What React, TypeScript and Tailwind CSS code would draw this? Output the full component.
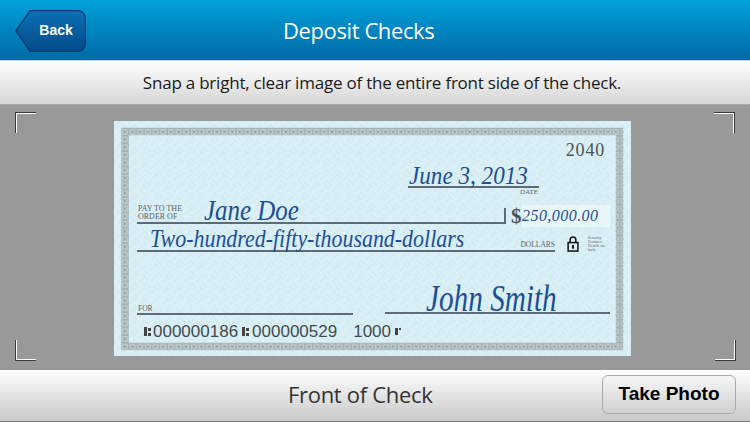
import React from 'react'

const hand = "font-['Liberation_Serif',serif] italic text-[#1c4f97] leading-none origin-bottom-left whitespace-nowrap"
const printed = "font-['Liberation_Serif',serif] text-[#5b6468] leading-none"

function Corner({ className, inner }: { className: string; inner: string }) {
  return (
    <div className={`absolute w-[21px] h-[21px] border-[#3a3a3a] ${className}`}>
      <div className={`w-full h-full border-white ${inner}`} />
    </div>
  )
}

function MicrMark() {
  return (
    <span className="inline-flex items-center gap-px h-[10px] w-[8px]">
      <span className="w-[3px] h-[9px] bg-[#444]" />
      <span className="flex flex-col gap-[2px]">
        <span className="w-[3px] h-[3px] bg-[#444]" />
        <span className="w-[3px] h-[3px] bg-[#444]" />
      </span>
    </span>
  )
}

function CheckArt() {
  return (
    <svg className="absolute inset-0 w-full h-full" viewBox="0 0 517 235">
      <defs>
        <pattern id="weave" width="16" height="16" patternUnits="userSpaceOnUse" patternTransform="rotate(45)">
          <path d="M0 4h8M0 8h8M8 12h8M8 16h8M12 0v8M4 8v8" stroke="#cfe6ee" strokeWidth="1" fill="none" />
        </pattern>
        <pattern id="strip" width="7.67" height="7.67" patternUnits="userSpaceOnUse" x="7" y="7">
          <rect width="7.67" height="7.67" fill="#a6b4b7" />
          <rect x="1" y="1" width="5.67" height="5.67" fill="#c0ced1" />
          <path d="M2.2 2.2l3.2 3.2M5.4 2.2L2.2 5.4" stroke="#7f8c8f" strokeWidth="0.8" />
        </pattern>
      </defs>
      <rect width="517" height="235" fill="#daf0f6" />
      <rect width="517" height="235" fill="url(#weave)" />
      <rect x="11" y="10.5" width="494.5" height="215" fill="none" stroke="url(#strip)" strokeWidth="7.5" />
    </svg>
  )
}

export default function App() {
  return (
    <div className="w-[750px] h-[422px] overflow-hidden flex flex-col font-['Open_Sans',sans-serif]">
      {/* header */}
      <div className="h-[61px] shrink-0 flex items-center pl-[15px] bg-gradient-to-b from-[#00a2da] to-[#0069a6] border-b border-[#c3d3dd]">
        <button className="relative w-[71px] h-[42px] flex items-center justify-center pl-[11px] mt-[1px]">
          <svg className="absolute inset-0 w-full h-full" viewBox="0 0 71 42">
            <defs>
              <linearGradient id="backFill" x1="0" y1="0" x2="0" y2="1">
                <stop offset="0" stopColor="#0a71b4" />
                <stop offset="1" stopColor="#034a8a" />
              </linearGradient>
            </defs>
            <path
              d="M15 .7H63a7.3 7.3 0 0 1 7.3 7.3v26a7.3 7.3 0 0 1-7.3 7.3H15L.8 21z"
              fill="url(#backFill)"
              stroke="#04386b"
              strokeWidth="1.2"
              strokeLinejoin="round"
            />
          </svg>
          <span className="relative font-['Liberation_Sans',sans-serif] font-bold text-[14px] text-white">Back</span>
        </button>
        <h1 className="ml-[197px] text-[22px] leading-none text-white tracking-[-0.4px] whitespace-nowrap">Deposit Checks</h1>
      </div>

      {/* instruction */}
      <div className="h-[44px] shrink-0 flex items-center justify-center pl-[14px] bg-gradient-to-b from-white to-[#d6d6d6] border-b border-[#a9a9a9]">
        <p className="text-[17px] leading-none text-[#1a1a1a] tracking-[-0.22px] whitespace-nowrap">
          Snap a bright, clear image of the entire front side of the check.
        </p>
      </div>

      {/* camera area */}
      <div className="relative h-[265px] shrink-0 bg-[#999999] flex justify-center pt-[16px]">
        <Corner className="left-[15px] top-[7px] border-t border-l" inner="border-t border-l" />
        <Corner className="right-[15px] top-[7px] border-t border-r" inner="border-t border-r" />
        <Corner className="left-[15px] bottom-[9px] border-b border-l" inner="border-b border-l" />
        <Corner className="right-[14px] bottom-[9px] border-b border-r" inner="border-b border-r" />

        <div className="relative w-[517px] h-[235px] ml-[-5px] overflow-hidden">
          <CheckArt />
          <div className="relative h-full flex flex-col pl-[23px] pr-[21px]">
            <div className="h-[37px] pt-[20px] flex justify-end pr-[5px]">
              <span className="font-['Liberation_Serif',serif] leading-none text-[18px] text-[#4b5357] tracking-[0.8px]">2040</span>
            </div>

            {/* date */}
            <div className="h-[30px] flex justify-end pr-[71px]">
              <div className="w-[131px] h-[30px] border-b-2 border-[#5f6b73] flex items-end pl-[1px]">
                <span className={`${hand} text-[26px] scale-x-[.89] mb-[-3px]`}>June 3, 2013</span>
              </div>
            </div>
            <div className="h-[8px] flex justify-end pr-[72px] pt-[1px]">
              <span className={`${printed} text-[7px]`}>DATE</span>
            </div>

            {/* pay to */}
            <div className="h-[29px] mt-[1px] flex items-start">
              <div className="w-[367px] h-[27px] flex items-end border-b-2 border-[#5f6b73]">
                <span className={`${printed} text-[8px] w-[67px] pb-[1px] pl-[1px]`}>
                  PAY TO THE
                  <br />
                  ORDER OF
                </span>
                <span className={`${hand} text-[30px] scale-x-[.83] mb-[-3px]`}>Jane Doe</span>
              </div>
              <div className="w-[2px] h-[16px] mt-[11px] bg-[#5f6b73]" />
              <span className="ml-[5px] mt-[9px] w-[11px] font-['Liberation_Serif',serif] font-bold text-[21px] leading-none text-[#4b5357]">$</span>
              <div className="mt-[8px] w-[88px] h-[22px] bg-[#e8f5f9] flex items-center">
                <span className={`${hand} text-[16px] tracking-[0.45px]`}>250,000.00</span>
              </div>
            </div>

            {/* amount in words */}
            <div className="h-[30px] flex items-start">
              <div className="w-[419px] h-[26px] border-b-2 border-[#5f6b73] flex items-end justify-between pl-[13px]">
                <span className={`${hand} w-[314px] text-[25px] scale-x-[.877] mb-[-1px]`}>Two-hundred-fifty-thousand-dollars</span>
                <span className={`${printed} text-[7.5px] pb-[2px]`}>DOLLARS</span>
              </div>
              <svg className="ml-[12px] mt-[10px] shrink-0" width="12" height="16" viewBox="0 0 12 17">
                <path d="M3 7V4a3 3 0 0 1 6 0v3" fill="none" stroke="#111" strokeWidth="1.6" />
                <rect x="0.8" y="7" width="10.4" height="9" fill="none" stroke="#111" strokeWidth="1.6" />
                <rect x="5" y="9.5" width="2" height="4" fill="#111" />
              </svg>
              <span className={`${printed} ml-[9px] mt-[10px] text-[4px] leading-[4px] w-[22px]`}>
                Security Features Details on back
              </span>
            </div>

            {/* memo and signature */}
            <div className="h-[34px] mt-[25px] flex items-end">
              <div className="w-[216px] h-[11px] border-b-2 border-[#5f6b73] flex items-end pl-[1px]">
                <span className={`${printed} text-[7.5px] pb-[1px]`}>FOR</span>
              </div>
              <div className="ml-[32px] w-[225px] h-[34px] mb-[1px] border-b-2 border-[#5f6b73] flex items-end pl-[41px]">
                <span className={`${hand} text-[37px] scale-x-[.79] mb-[-5px]`}>John Smith</span>
              </div>
            </div>

            {/* micr line */}
            <div className="mt-[8px] pl-[7px] flex items-center font-['Liberation_Sans',sans-serif] text-[17px] leading-none text-[#444b4f] whitespace-nowrap">
              <MicrMark />
              <span className="ml-px">000000186</span>
              <span className="w-[4px]" />
              <MicrMark />
              <span className="ml-[2px]">000000529</span>
              <span className="ml-[16px]">1000</span>
              <span className="ml-[4px] inline-flex items-start gap-px h-[8px]">
                <span className="w-[3px] h-[7px] bg-[#444]" />
                <span className="w-[2px] h-[2px] bg-[#444]" />
              </span>
            </div>
          </div>
        </div>
      </div>

      {/* footer */}
      <div className="flex-1 flex items-center pl-[288px] pr-[14px] bg-gradient-to-b from-white to-[#c9c9c9] border-b border-[#777]">
        <span className="text-[22px] leading-none text-[#333] tracking-[-0.3px] whitespace-nowrap mt-[-3px]">Front of Check</span>
        <button className="ml-auto w-[134px] h-[39px] mt-[-3px] rounded-[6px] border border-[#a8a8a8] bg-gradient-to-b from-[#f7f7f7] to-[#d0d0d0] font-['Liberation_Sans',sans-serif] font-bold text-[19px] text-black">
          Take Photo
        </button>
      </div>
    </div>
  )
}
